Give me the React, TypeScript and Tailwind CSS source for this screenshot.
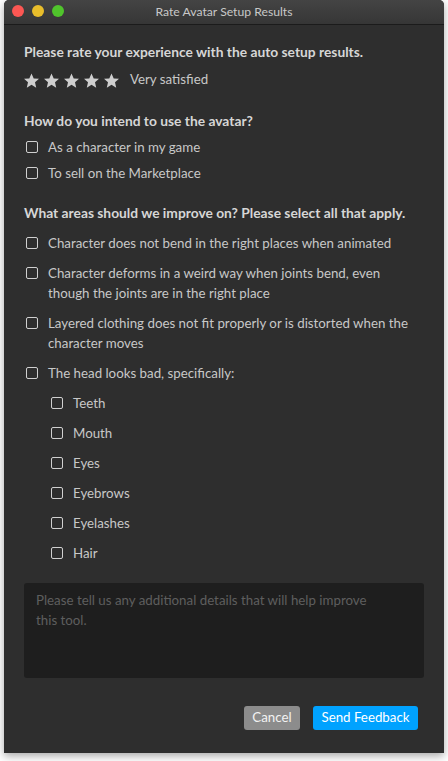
import { useState } from "react";

const font = { fontFamily: "Lato, 'Noto Sans', sans-serif" };

function Star() {
  return (
    <svg width="15" height="15" viewBox="1.5 1.2 21 20.4" className="shrink-0">
      <path
        d="M12 1.5l3.1 7 7.4.6-5.6 4.9 1.7 7.4L12 17.5l-6.6 3.9 1.7-7.4L1.5 9.1l7.4-.6z"
        fill="#cfcfcf"
      />
    </svg>
  );
}

function Check({ label, className = "" }: { label: React.ReactNode; className?: string }) {
  const [on, setOn] = useState(false);
  return (
    <label className={`flex items-start cursor-pointer ${className}`}>
      <span
        onClick={() => setOn(!on)}
        className={`mt-[4px] ml-[2px] mr-[10px] w-[12px] h-[12px] shrink-0 rounded-[2px] border border-[#d0d0d0] ${
          on ? "bg-[#00a2ff] border-[#00a2ff]" : ""
        }`}
      />
      <span className="text-[13.3px] leading-[20px] text-[#c8c8c8]">{label}</span>
    </label>
  );
}

export default function App() {
  const head = ["Teeth", "Mouth", "Eyes", "Eyebrows", "Eyelashes", "Hair"];

  return (
    <div className="w-[448px] h-[761px] bg-white" style={font}>
      <div className="ml-[4px] w-[440px] h-[753px] flex flex-col bg-[#2e2e2e] rounded-t-[5px] shadow-[0_3px_8px_rgba(0,0,0,0.35)] overflow-hidden">
        {/* title bar */}
        <div className="relative h-[25px] shrink-0 bg-gradient-to-b from-[#444444] to-[#363636] border-b border-[#1b1b1b] flex items-center justify-center">
          <div className="absolute left-[8px] top-[5px] flex gap-[8px]">
            <span className="w-[12px] h-[12px] rounded-full bg-[#fc5753]" />
            <span className="w-[12px] h-[12px] rounded-full bg-[#e8bd2b]" />
            <span className="w-[12px] h-[12px] rounded-full bg-[#50c42c]" />
          </div>
          <span className="text-[12.2px] text-[#c8c8c8]">Rate Avatar Setup Results</span>
        </div>

        <div className="flex flex-col px-[20px] pt-[17px] pb-[23px] flex-1">
          <h2 className="text-[13.8px] leading-[20px] font-bold text-[#d6d6d6]">
            Please rate your experience with the auto setup results.
          </h2>
          <div className="mt-[8px] h-[20px] flex items-center">
            <div className="flex gap-[5px]">
              <Star />
              <Star />
              <Star />
              <Star />
              <Star />
            </div>
            <span className="ml-[11px] text-[13.3px] text-[#c8c8c8]">Very satisfied</span>
          </div>

          <h2 className="mt-[21px] text-[13.8px] leading-[20px] font-bold text-[#d6d6d6]">
            How do you intend to use the avatar?
          </h2>
          <div className="mt-[6px] flex flex-col gap-[6px]">
            <Check label="As a character in my game" />
            <Check label="To sell on the Marketplace" />
          </div>

          <h2 className="mt-[20px] text-[13.8px] leading-[20px] font-bold text-[#d6d6d6]">
            What areas should we improve on? Please select all that apply.
          </h2>
          <div className="mt-[10px] flex flex-col gap-[10px]">
            <Check label="Character does not bend in the right places when animated" />
            <Check label="Character deforms in a weird way when joints bend, even though the joints are in the right place" />
            <Check label="Layered clothing does not fit properly or is distorted when the character moves" />
            <Check label="The head looks bad, specifically:" />
            {head.map((h) => (
              <Check key={h} label={h} className="pl-[25px]" />
            ))}
          </div>

          <textarea
            className="mt-[20px] h-[95px] w-full resize-none rounded-[3px] bg-[#1e1e1e] px-[12px] py-[7px] text-[13.3px] leading-[20px] text-[#c8c8c8] placeholder:text-[#5e5e5e] outline-none"
            placeholder={"Please tell us any additional details that will help improve\nthis tool."}
          />

          <div className="mt-[28px] flex justify-end gap-[13px] pr-[6px]">
            <button className="h-[24px] w-[56px] rounded-[3px] bg-[#8c8c8c] text-[13.3px] text-[#f2f2f2]">
              Cancel
            </button>
            <button className="h-[24px] w-[105px] rounded-[3px] bg-[#00a2ff] text-[13.3px] text-white">
              Send Feedback
            </button>
          </div>
        </div>
      </div>
    </div>
  );
}
